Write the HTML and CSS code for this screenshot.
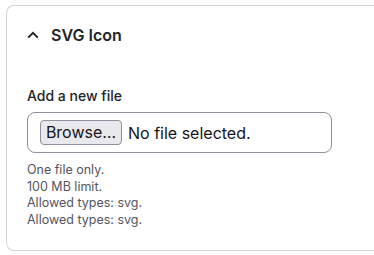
FILE: index.html
```html
<!DOCTYPE html>
<html lang="en">
<head>
<meta charset="utf-8">
<link rel="stylesheet" href="styles.css">
</head>
<body>
<div class="page">
  <section class="card">
    <div class="card-header">
      <svg class="chevron" width="12" height="8" viewBox="0 0 12 8"><path d="M1.2 6.6L6 1.9L10.8 6.6" fill="none" stroke="#232429" stroke-width="2"/></svg>
      <span class="card-title">SVG Icon</span>
    </div>
    <div class="card-body">
      <div class="field-label">Add a new file</div>
      <div class="file-box">
        <span class="browse">Browse…</span>
        <span class="file-status">No file selected.</span>
      </div>
      <div class="desc">
        <div>One file only.</div>
        <div>100 MB limit.</div>
        <div>Allowed types: svg.</div>
        <div>Allowed types: svg.</div>
      </div>
    </div>
  </section>
</div>
</body>
</html>
```
FILE: styles.css
```css
html, body { margin: 0; padding: 0; background: #fff; }
body { font-family: Inter, "Noto Sans", sans-serif; color: #232429; overflow: hidden; }
.page { padding: 5px 0 0 6px; }
.card {
  height: 246px;
  box-sizing: border-box;
  border: 1px solid #d4d4d8;
  border-right: none;
  border-radius: 8px 0 0 8px;
}
.card-header {
  display: flex;
  align-items: center;
  padding: 19px 0 0 20px;
  height: 20px;
}
.chevron { display: block; margin-right: 12px; }
.card-title { font-size: 16px; font-weight: 600; line-height: 20px; }
.card-body { padding: 42px 0 0 20px; }
.field-label { font-size: 14px; font-weight: 500; line-height: 18px; }
.file-box {
  margin-top: 7px;
  width: 305px;
  height: 41px;
  box-sizing: border-box;
  border: 1px solid #8e929c;
  border-radius: 8px;
  display: flex;
  align-items: center;
  padding: 0 12px;
}
.browse {
  display: inline-block;
  box-sizing: border-box;
  height: 25px;
  width: 82px;
  border: 1px solid #8f8f9d;
  border-radius: 4px;
  background: #e9e9ed;
  font-size: 16px;
  line-height: 23px;
  text-align: center;
  color: #15141a;
}
.file-status { margin-left: 6px; font-size: 16px; color: #15141a; }
.desc {
  margin-top: 9px;
  font-size: 12.5px;
  line-height: 16.6px;
  color: #55565e;
}
```
